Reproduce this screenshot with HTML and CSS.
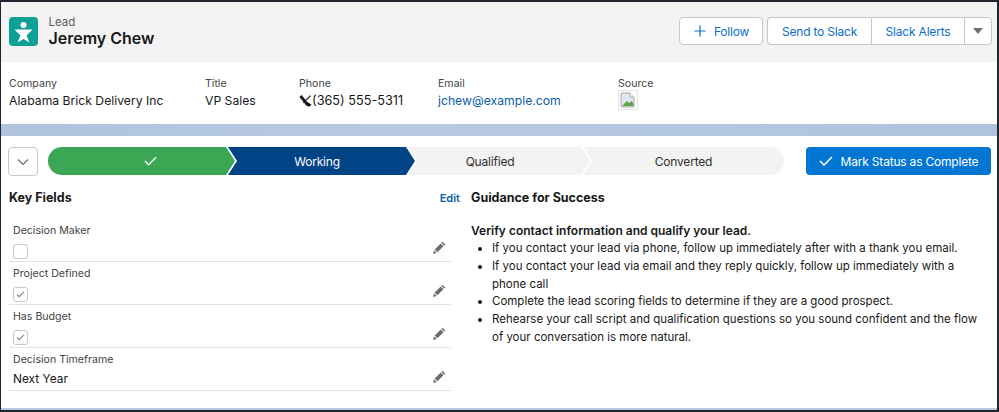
FILE: index.html
```html
<!DOCTYPE html>
<html lang="en">
<head>
<meta charset="utf-8">
<title>Lead - Jeremy Chew</title>
<link rel="stylesheet" href="styles.css">
</head>
<body>
<div class="frame">
  <header class="head">
    <div class="identity">
      <span class="lead-icon">
        <svg viewBox="0 0 29 29" width="29" height="29"><circle cx="14.500" cy="8" r="3" fill="#fff"/><path d="M5.500 12.500h18l-6 6 3 7-6-3.500-6 3.500 3-7z" fill="#fff"/></svg>
      </span>
      <div class="names">
        <div class="type">Lead</div>
        <div class="name">Jeremy Chew</div>
      </div>
    </div>
    <div class="actions">
      <button class="btn follow"><svg viewBox="0 0 12 12" width="12" height="12"><path d="M6 .5v11M.5 6h11" stroke="#0b6fc7" stroke-width="1.200" fill="none"/></svg>Follow</button>
      <div class="btn-group">
        <button class="btn slack">Send to Slack</button>
        <button class="btn alerts">Slack Alerts</button>
        <button class="btn more"><svg viewBox="0 0 10 6" width="10" height="6"><path d="M0 0h10L5 6z" fill="#706e6b"/></svg></button>
      </div>
    </div>
  </header>
  <section class="highlights">
    <div class="hl hl-company"><div class="hl-label">Company</div><div class="hl-value">Alabama Brick Delivery Inc</div></div>
    <div class="hl hl-title"><div class="hl-label">Title</div><div class="hl-value">VP Sales</div></div>
    <div class="hl hl-phone"><div class="hl-label">Phone</div><div class="hl-value hl-tel"><svg class="phone" viewBox="0 0 13 12" width="13" height="12"><path d="M1.500 1 8 9" stroke="#181818" stroke-width="2.800" fill="none"/><path d="M6 8.500 8.500 7l3.800 2.600c-.2 1.400-1.700 2.300-3.100 1.900C7.800 11 6.600 10 6 8.500z" fill="#181818"/><path d="M11.500.6 4.300 7.800" stroke="#181818" stroke-width="1.200" fill="none"/></svg>(365) 555-5311</div></div>
    <div class="hl hl-email"><div class="hl-label">Email</div><div class="hl-value link">jchew@example.com</div></div>
    <div class="hl hl-source"><div class="hl-label">Source</div><div class="broken"><svg viewBox="0 0 16 16" width="16" height="16"><path d="M1 1h9l4 4v10H1z" fill="#dfe7f3" stroke="#9a9a9a" stroke-width=".8"/><path d="M2 14l5-5 2 2 3-2 2 5z" fill="#5aa83f"/><path d="M10 1v4h4" fill="#fff" stroke="#9a9a9a" stroke-width=".8"/></svg></div></div>
  </section>
  <div class="band"></div>
  <section class="path-row">
    <button class="toggle"><svg viewBox="0 0 12 8" width="12" height="8"><path d="M1 1.500l5 5 5-5" stroke="#706e6b" stroke-width="1.200" fill="none"/></svg></button>
    <div class="path">
      <div class="stage done"><svg viewBox="0 0 14 10" width="13" height="10"><path d="M1 5l4 4 8-8" stroke="#fff" stroke-width="1.500" fill="none"/></svg></div>
      <div class="stage current">Working</div>
      <div class="stage todo">Qualified</div>
      <div class="stage todo last">Converted</div>
    </div>
    <button class="complete"><svg viewBox="0 0 14 10" width="14" height="10"><path d="M1 5l4 4 8-8" stroke="#fff" stroke-width="1.500" fill="none"/></svg>Mark Status as Complete</button>
  </section>
  <section class="columns">
    <div class="key">
      <div class="key-head"><h2>Key Fields</h2><span class="edit">Edit</span></div>
      <div class="field">
        <div class="f-label">Decision Maker</div>
        <div class="f-value"><span class="box"></span><svg class="pencil" viewBox="0 0 14 14" width="13" height="13"><use href="#pen"/></svg></div>
      </div>
      <div class="field">
        <div class="f-label">Project Defined</div>
        <div class="f-value"><span class="box"><svg viewBox="0 0 10 8" width="9" height="7"><path d="M1 4l2.500 2.500L9 1" stroke="#8a8886" stroke-width="1.400" fill="none"/></svg></span><svg class="pencil" viewBox="0 0 14 14" width="13" height="13"><use href="#pen"/></svg></div>
      </div>
      <div class="field">
        <div class="f-label">Has Budget</div>
        <div class="f-value"><span class="box"><svg viewBox="0 0 10 8" width="9" height="7"><path d="M1 4l2.500 2.500L9 1" stroke="#8a8886" stroke-width="1.400" fill="none"/></svg></span><svg class="pencil" viewBox="0 0 14 14" width="13" height="13"><use href="#pen"/></svg></div>
      </div>
      <div class="field">
        <div class="f-label">Decision Timeframe</div>
        <div class="f-value"><span class="f-text">Next Year</span><svg class="pencil" viewBox="0 0 14 14" width="13" height="13"><use href="#pen"/></svg></div>
      </div>
    </div>
    <div class="guide">
      <h2>Guidance for Success</h2>
      <p class="g-lead">Verify contact information and qualify your lead.</p>
      <ul>
        <li>If you contact your lead via phone, follow up immediately after with a thank you email.</li>
        <li>If you contact your lead via email and they reply quickly, follow up immediately with a phone call</li>
        <li>Complete the lead scoring fields to determine if they are a good prospect.</li>
        <li>Rehearse your call script and qualification questions so you sound confident and the flow of your conversation is more natural.</li>
      </ul>
    </div>
  </section>
  <svg class="defs" width="0" height="0"><defs><path id="pen" d="M10.200.8l3 3L12 5 9 2zM8.300 2.700l3 3-6.500 6.500-3-3zM1.200 10l2.800 2.800L0 14z" fill="#706e6b"/></defs></svg>
</div>
</body>
</html>
```
FILE: styles.css
```css
* { box-sizing: border-box; }
html, body { margin: 0; padding: 0; background: #fff; }
body { font-family: Inter, "Liberation Sans", sans-serif; color: #181818; font-size: 12.200px; }
button { font-family: inherit; cursor: pointer; }
h2 { margin: 0; font-size: 12.500px; font-weight: 700; }

.frame {
  width: 999px; height: 412px; overflow: hidden;
  border-top: 2px solid #20242c; border-left: 1px solid #20242c;
  border-right: 2px solid #20242c; border-bottom: 2px solid #20242c;
  background: #fff; display: flex; flex-direction: column;
  box-shadow: inset 0 -2px 0 #b7c9e2;
}

.head { height: 60px; flex: none; background: #f3f3f3; display: flex; justify-content: space-between; align-items: center; padding: 0 5px 2px 8px; }
.identity { display: flex; align-items: center; gap: 10.500px; }
.lead-icon { width: 29px; height: 29px; border-radius: 4px; background: #0da194; display: block; }
.lead-icon svg { display: block; }
.type { font-size: 11.500px; line-height: 14px; color: #5c5c5c; }
.name { font-size: 16px; line-height: 19px; font-weight: 600; color: #181818; }

.actions { display: flex; gap: 4px; }
.btn { height: 28px; background: #fff; border: 1px solid #c9c7c5; color: #0b6fc7; font-size: 12px; letter-spacing: -.2px; padding: 0; display: flex; align-items: center; justify-content: center; }
.follow { width: 84px; border-radius: 4px; gap: 8px; padding-left: 1px; }
.btn-group { display: flex; }
.slack { width: 104px; border-radius: 4px 0 0 4px; border-right: 0; }
.alerts { width: 93px; border-right: 0; }
.more { width: 28px; border-radius: 0 4px 4px 0; }

.highlights { height: 62px; flex: none; display: flex; padding: 14px 0 0 8px; }
.hl-label { font-size: 10.600px; line-height: 15px; color: #444; }
.hl-value { font-size: 12.200px; line-height: 19px; color: #181818; display: flex; align-items: center; }
.hl-tel { font-size: 12.700px; }
.hl-company { width: 196px; }
.hl-title { width: 94px; }
.hl-phone { width: 139px; }
.hl-email { width: 180px; }
.link { color: #0b5cab; }
.broken { width: 20px; height: 20px; margin-top: -1px; border: 1px solid #e4e4e4; display: flex; align-items: center; justify-content: center; }

.band { height: 12px; flex: none; background: linear-gradient(90deg, #afc3dd, #b8cae2 40%, #afc3de); }

.path-row { flex: none; display: flex; align-items: flex-start; padding: 11px 6px 0 7px; }
.toggle { width: 30px; height: 29px; background: #fff; border: 1px solid #c9c7c5; border-radius: 4px; padding: 0; display: flex; align-items: center; justify-content: center; }
.path { width: 736px; margin-left: 10px; height: 28px; display: flex; border-radius: 14px; overflow: hidden; }
.stage { height: 28px; display: flex; align-items: center; justify-content: center; font-size: 12px; letter-spacing: -.2px; flex: none; }
.done { width: 187px; background: #3ba755; clip-path: polygon(0 0, calc(100% - 9px) 0, 100% 50%, calc(100% - 9px) 100%, 0 100%); padding-left: 17px; }
.current { width: 187px; margin-left: -7px; background: #014486; color: #fff; clip-path: polygon(0 0, calc(100% - 9px) 0, 100% 50%, calc(100% - 9px) 100%, 0 100%, 9px 50%); padding-right: 9px; }
.todo { width: 182px; margin-left: -7px; background: #f3f3f3; color: #2e2e2e; clip-path: polygon(0 0, calc(100% - 9px) 0, 100% 50%, calc(100% - 9px) 100%, 0 100%, 9px 50%); padding-right: 18px; }
.todo.last { width: 201px; clip-path: polygon(0 0, 100% 0, 100% 100%, 0 100%, 9px 50%); padding-right: 0; }
.complete { width: 185px; height: 28px; margin-left: 22px; background: #0176d3; border: 0; border-radius: 4px; color: #fff; font-size: 12px; letter-spacing: -.2px; display: flex; align-items: center; justify-content: center; gap: 8px; padding: 0; }

.columns { flex: 1; display: flex; padding: 14px 0 0 8px; }
.key { width: 462px; }
.key-head { display: flex; justify-content: space-between; align-items: center; width: 451px; height: 15px; margin-bottom: 14px; }
.edit { color: #0b5cab; font-size: 11px; font-weight: 600; }
.field { width: 442px; height: 43px; padding: 5px 4px 0 4px; border-bottom: 1px solid #e2e2e2; display: flex; flex-direction: column; }
.f-label { font-size: 10.600px; line-height: 14px; color: #444; height: 14px; }
.f-value { height: 23px; display: flex; justify-content: space-between; align-items: flex-end; padding-bottom: 2px; }
.box { width: 15px; height: 15px; border: 1px solid #c9c7c5; border-radius: 3px; display: flex; align-items: center; justify-content: center; background: #fff; }
.pencil { margin-right: 1px; align-self: flex-start; margin-top: 3px; }
.f-text { font-size: 11.900px; line-height: 18px; }

.guide { width: 510px; }
.guide h2 { line-height: 15px; margin-bottom: 18px; }
.g-lead { margin: 0; font-size: 12px; font-weight: 600; line-height: 15px; }
.guide ul { margin: 2px 0 0; padding: 0 0 0 21px; line-height: 17.800px; font-size: 11.500px; }
.defs { position: absolute; }
```
